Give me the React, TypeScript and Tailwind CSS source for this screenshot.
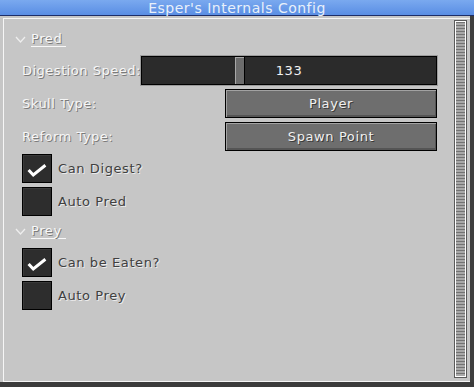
import React from "react";

const Chevron: React.FC = () => (
  <svg width="11" height="7" viewBox="0 0 11 7" className="shrink-0">
    <polyline points="1,1 5.5,6 10,1" fill="none" stroke="#eeeeee" strokeWidth="1.3" />
  </svg>
);

const SectionHeader: React.FC<{ title: string; className?: string }> = ({ title, className }) => (
  <div className={`flex h-[16px] items-center gap-[5px] ${className ?? ""}`}>
    <Chevron />
    <span className="border-b border-[#f8f8f8] pr-[4px] text-[13px] leading-[14px] tracking-[0.6px] text-[#f8f8f8] [text-shadow:1px_1px_0_#7c7c7c]">
      {title}
    </span>
  </div>
);

const RowLabel: React.FC<{ text: string }> = ({ text }) => (
  <span className="flex-1 whitespace-nowrap text-[13px] tracking-[0.5px] text-[#f6f6f6] [text-shadow:1px_1px_0_#7a7a7a]">{text}</span>
);

const CycleButton: React.FC<{ label: string }> = ({ label }) => (
  <div className="flex h-[29px] w-[212px] items-center justify-center border border-black bg-[#6e6e6e] shadow-[inset_1px_1px_0_#a2a2a2,inset_-1px_-2px_0_#555555]">
    <span className="text-[13px] tracking-[0.6px] text-[#f0f0f0] [text-shadow:1px_1px_0_#3a3a3a]">{label}</span>
  </div>
);

const Checkbox: React.FC<{ label: string; checked?: boolean; className?: string }> = ({ label, checked, className }) => (
  <div className={`flex items-center gap-[6px] pl-[7px] ${className ?? ""}`}>
    <div className="flex h-[29px] w-[30px] items-center justify-center border border-black bg-[#2d2d2d] shadow-[inset_1px_1px_0_#3a3a3a]">
      {checked && (
        <svg width="30" height="29" viewBox="0 0 30 29">
          <polyline points="6,16 11,21.5 24,11" fill="none" stroke="#ffffff" strokeWidth="3.2" strokeLinejoin="miter" />
        </svg>
      )}
    </div>
    <span className="text-[13px] tracking-[0.6px] text-[#404040] [text-shadow:1px_1px_0_#ececec]">{label}</span>
  </div>
);

const App: React.FC = () => {
  const speed = 133;

  return (
    <div className="h-[387px] w-[474px] overflow-hidden bg-[#3b3b3b] font-['DejaVu_Sans',sans-serif]">
      {/* title bar */}
      <div className="flex h-[16px] items-center justify-center border-b border-[#1d2e68] bg-linear-to-b from-[#7aa9ef] to-[#5a8ee4]">
        <span className="text-[14px] leading-[14px] tracking-[0.5px] text-[#e8f0fa]">Esper's Internals Config</span>
      </div>

      <div className="flex h-[366px]">
        {/* panel */}
        <div className="w-[470px] bg-[#c6c6c6] pl-[3px] pt-[2px]">
          <div className="flex h-full border-b border-l border-t border-[#f6f6f6]">
            {/* content */}
            <div className="flex-1 pl-[11px]">
              <div className="w-[422px]">
                <SectionHeader title="Pred" className="mt-[12px]" />

                <div className="mt-[9px] flex items-center pl-[7px]">
                  <RowLabel text="Digestion Speed:" />
                  <div className="relative flex h-[29px] w-[296px] items-center justify-center border border-black bg-[#2b2b2b] shadow-[0_0_0_1px_#9c9c9c]">
                    <div className="absolute left-[93px] top-0 h-full w-[10px] border-r border-black bg-[#6c6c6c] shadow-[inset_1px_1px_0_#a8a8a8]" />
                    <span className="relative text-[13px] tracking-[0.6px] text-[#f2f2f2] [text-shadow:1px_1px_0_#333333]">{speed}</span>
                  </div>
                </div>

                <div className="mt-[4px] flex items-center pl-[7px]">
                  <RowLabel text="Skull Type:" />
                  <CycleButton label="Player" />
                </div>

                <div className="mt-[4px] flex items-center pl-[7px]">
                  <RowLabel text="Reform Type:" />
                  <CycleButton label="Spawn Point" />
                </div>

                <Checkbox label="Can Digest?" checked className="mt-[3px]" />
                <Checkbox label="Auto Pred" className="mt-[4px]" />

                <SectionHeader title="Prey" className="mt-[7px]" />

                <Checkbox label="Can be Eaten?" checked className="mt-[9px]" />
                <Checkbox label="Auto Prey" className="mt-[4px]" />
              </div>
            </div>

            {/* scrollbar */}
            <div className="mr-[3px] mt-[1px] mb-[3px] w-[13px] border border-[#5a5a5a] bg-white p-[1px]">
              <div className="h-full w-full bg-[repeating-linear-gradient(to_bottom,#737373_0px,#737373_1px,#a9a9a9_1px,#a9a9a9_3px)]" />
            </div>
          </div>
        </div>
        <div className="flex-1 bg-[#3e3e3e]" />
      </div>
    </div>
  );
};

export default App;
